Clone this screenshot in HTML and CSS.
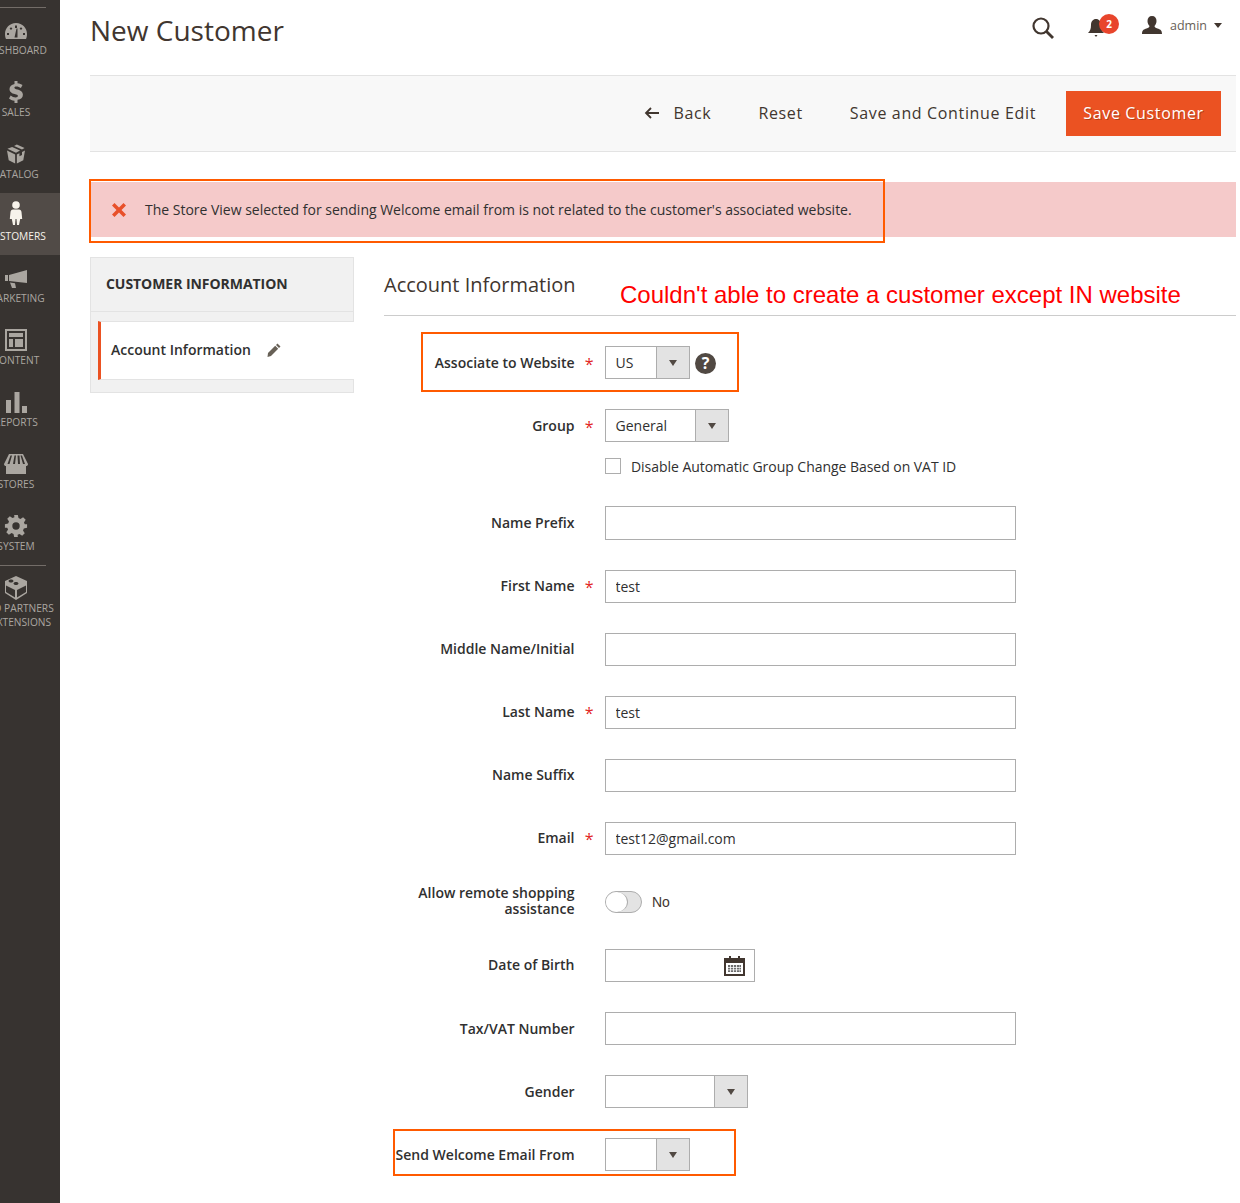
FILE: index.html
```html
<!DOCTYPE html>
<html lang="en">
<head>
    <meta charset="UTF-8">
    <title>New Customer</title>
    <link rel="stylesheet" href="styles.css">
</head>
<body>
    <aside class="sidebar">
        <ul class="nav">
            <li class="nav-rule"></li>
            <li class="nav-item">
                <svg class="nav-icon" viewBox="0 -2 24 24"><path d="M12 3C5.500 3 1 8 1 14c0 2 .4 3.700 1 5h20c.6-1.300 1-3 1-5 0-6-4.500-11-11-11zM5 15H3v-2h2zm2-5L5.600 8.600l1.400-1.400L8.400 8.600zm4-2V5.500h2V8zm2.500 9.500h-3l2-9h1zm3.500-7.500-1.400-1.400L17 7.200l1.400 1.400zm4 5h-2v-2h2z" fill-rule="evenodd"/></svg>
                <span>Dashboard</span>
            </li>
            <li class="nav-item">
                <svg class="nav-icon" viewBox="0 0 24 24"><path d="M10.500 1h3v2.200c2.200.2 3.900 1 5 1.900l-1.600 3c-1.300-.9-2.900-1.600-4.500-1.600-1.300 0-2 .5-2 1.200 0 .9 1 1.200 3 1.800 3 .9 5.500 2.100 5.500 5.300 0 2.800-2 4.600-5.400 5V23h-3v-2.200c-2.300-.2-4.300-1.100-5.500-2.300l1.700-3c1.400 1.200 3.100 2 4.900 2 1.400 0 2.300-.5 2.300-1.400 0-1-1.100-1.400-3.200-2C7.900 13.300 5.500 12 5.500 9c0-2.700 2-4.600 5-5.100z"/></svg>
                <span>Sales</span>
            </li>
            <li class="nav-item">
                <svg class="nav-icon" viewBox="-2 -2 28 28"><path d="M13 1l9 4-3 1.800-9.300-4.200zM7.500 3.700l9.200 4.300L12 10.500 2 6zM1.500 8l9.500 4.700V23l-7.500-3.800L1.500 8zm21 0-2 11.200L13 23V12.700l3-1.500v3.500l3-1.500v-3.500z"/></svg>
                <span>Catalog</span>
            </li>
            <li class="nav-item active">
                <svg class="nav-icon" viewBox="0 0 24 24"><circle cx="12" cy="4" r="3.800"/><path d="M9 8.500h6c1.500 0 2.300 1 2.500 2.500l.7 7h-2L15 24h-2l-.5-6h-1L11 24H9l-1.200-6h-2l.7-7C6.700 9.500 7.500 8.500 9 8.500z"/></svg>
                <span>Customers</span>
            </li>
            <li class="nav-item">
                <svg class="nav-icon" viewBox="0 0 24 24"><path d="M1 9h3v6H1zM5 9L23 4v13L5 15zM6 16.500l5 .8 1 4.700H8z"/></svg>
                <span>Marketing</span>
            </li>
            <li class="nav-item">
                <svg class="nav-icon" viewBox="0 0 24 24"><path d="M1 1h22v22H1zm2 2v18h18V3zm2 2h14v4H5zm0 6h4v8H5zm6 0h8v8h-8z" fill-rule="evenodd"/></svg>
                <span>Content</span>
            </li>
            <li class="nav-item">
                <svg class="nav-icon" viewBox="0 0 24 24"><path d="M2 10h5v13H2zm8.500-8h5v21h-5zM18 16h5v7h-5z"/></svg>
                <span>Reports</span>
            </li>
            <li class="nav-item">
                <svg class="nav-icon" viewBox="0 0 24 24"><path d="M5 2h14l5 10c0 1.500-1 2-2 2v8H2v-8c-1 0-2-.5-2-2zm1.500 1.500L3.500 12h2l2.500-8.500zm4 0L9 12h2l1-8.500zm3 0L14 12h2l-.5-8.500zm3 0L19 12h2l-3-8.500z" fill-rule="evenodd"/></svg>
                <span>Stores</span>
            </li>
            <li class="nav-item">
                <svg class="nav-icon" viewBox="-1 -1 26 26"><path d="M10 0h4l.7 3.400 2.100.9 2.900-1.900 2.800 2.800-1.900 2.900.9 2.100L24 10v4l-3.500.8-.9 2.100 1.900 2.900-2.800 2.800-2.900-1.900-2.100.9L14 24h-4l-.7-3.400-2.100-.9-2.900 1.900-2.800-2.800 1.900-2.900-.9-2.100L0 14v-4l3.500-.8.900-2.100-1.900-2.900 2.800-2.800 2.900 1.900 2.100-.9zm2 8a4 4 0 1 0 0 8 4 4 0 0 0 0-8z" fill-rule="evenodd"/></svg>
                <span>System</span>
            </li>
            <li class="nav-rule"></li>
            <li class="nav-item nav-partners">
                <svg class="nav-icon" viewBox="0 0 24 24"><path d="M12 0l11 5v12l-11 7-11-7V5zM7 3.500c-1.500 0-2.500.7-2.500 1.500S5.500 6.500 7 6.500 9.500 5.800 9.500 5 8.500 3.500 7 3.500zm5 2.500c-1.500 0-2.500.7-2.500 1.500S10.500 9 12 9s2.500-.7 2.500-1.500S13.500 6 12 6zm-1 8L2 9.500V16l9 5.500zm2 0v7.500l9-5.500V9.500z" fill-rule="evenodd"/></svg>
                <span>Find Partners<br>&amp; Extensions</span>
            </li>
        </ul>
    </aside>

    <main class="page">
        <header class="page-header">
            <h1>New Customer</h1>
            <div class="header-tools">
                <svg class="icon-search" viewBox="0 0 22 22"><circle cx="9" cy="9" r="7.500" fill="none" stroke="#41362f" stroke-width="2.200"/><path d="M14.500 14.500L21 21" stroke="#41362f" stroke-width="2.800"/></svg>
                <div class="notice">
                    <svg class="icon-bell" viewBox="0 0 16 20"><path d="M8 1c3 0 5 2.500 5 6 0 4 1 6 3 8H0c2-2 3-4 3-8 0-3.500 2-6 5-6z M6.500 17h3L8 19z" fill="#41362f"/></svg>
                    <span class="badge">2</span>
                </div>
                <div class="user">
                    <svg class="icon-user" viewBox="0 0 20 18"><path d="M10 0c3 0 4.500 2 4.500 5 0 2-.8 3.800-2 5 .1 1.300 1 1.800 3 2.500 2.500.8 4.500 1.600 4.500 5.500H0c0-3.900 2-4.700 4.500-5.500 2-.7 2.900-1.200 3-2.500-1.200-1.200-2-3-2-5 0-3 1.500-5 4.500-5z" fill="#41362f"/></svg>
                    <span class="user-name">admin</span>
                    <span class="caret"></span>
                </div>
            </div>
        </header>

        <div class="actions">
            <a class="action action-back">
                <svg class="icon-back" viewBox="0 0 16 12"><path d="M15 6H2M7 1L2 6l5 5" fill="none" stroke="#41362f" stroke-width="1.800"/></svg>
                Back
            </a>
            <a class="action action-reset">Reset</a>
            <a class="action action-continue">Save and Continue Edit</a>
            <button class="save-button">Save Customer</button>
        </div>

        <div class="message">
            <svg class="icon-error" viewBox="0 0 16 16"><path d="M1 3.500L3.500 1 8 5.500 12.500 1 15 3.500 10.500 8l4.500 4.500-2.500 2.500L8 10.500 3.500 15 1 12.500 5.500 8z" fill="#e8502a"/></svg>
            The Store View selected for sending Welcome email from is not related to the customer's associated website.
        </div>

        <div class="columns">
            <div class="tabs">
                <div class="tabs-title">Customer Information</div>
                <div class="tabs-list">
                    <div class="tab-item">
                        Account Information
                        <svg class="icon-edit" viewBox="0 0 14 14"><path d="M10.500 0.500L13.500 3.500 12 5 9 2zM8.200 2.800l3 3L4 13l-3.500 1L1 10z" fill="#676056"/></svg>
                    </div>
                </div>
            </div>

            <section class="form-section">
                <h2>Account Information</h2>

                <div class="field field-website">
                    <label class="required">Associate to Website</label>
                    <div class="select select-small"><span>US</span><i class="select-arrow"></i></div>
                    <span class="help">?</span>
                </div>

                <div class="field field-group">
                    <label class="required">Group</label>
                    <div class="select select-group"><span>General</span><i class="select-arrow"></i></div>
                </div>

                <div class="field field-check">
                    <label></label>
                    <input class="checkbox" type="checkbox">
                    <span class="check-text">Disable Automatic Group Change Based on VAT ID</span>
                </div>

                <div class="field field-up">
                    <label>Name Prefix</label>
                    <input class="text-input tall" type="text">
                </div>
                <div class="field field-up">
                    <label class="required">First Name</label>
                    <input class="text-input" type="text" value="test">
                </div>
                <div class="field field-up">
                    <label>Middle Name/Initial</label>
                    <input class="text-input" type="text">
                </div>
                <div class="field field-up">
                    <label class="required">Last Name</label>
                    <input class="text-input" type="text" value="test">
                </div>
                <div class="field field-up">
                    <label>Name Suffix</label>
                    <input class="text-input" type="text">
                </div>
                <div class="field field-up">
                    <label class="required">Email</label>
                    <input class="text-input" type="text" value="test12@gmail.com">
                </div>
                <div class="field field-remote">
                    <label>Allow remote shopping assistance</label>
                    <span class="toggle"><i></i></span>
                    <span class="toggle-text">No</span>
                </div>
                <div class="field field-up">
                    <label>Date of Birth</label>
                    <div class="date-input">
                        <svg class="icon-calendar" viewBox="0 0 21 20">
                            <path d="M0 2h21v18H0z" fill="#41362f"/>
                            <path d="M2 7h17v11H2z" fill="#fff"/>
                            <path d="M5 0h2v5H5zm9 0h2v5h-2z" fill="#41362f"/>
                            <path d="M4 9h13v7H4z" fill="#6d6d6d"/>
                            <path d="M6.200 9h.8v7h-.8zm3 0h.8v7h-.8zm3 0h.8v7h-.8zm3 0h.4v7h-.4zM4 11h13v.7H4zm0 2.500h13v.7H4z" fill="#fff"/>
                        </svg>
                    </div>
                </div>
                <div class="field">
                    <label>Tax/VAT Number</label>
                    <input class="text-input" type="text">
                </div>
                <div class="field">
                    <label>Gender</label>
                    <div class="select select-gender"><span></span><i class="select-arrow"></i></div>
                </div>
                <div class="field">
                    <label>Send Welcome Email From</label>
                    <div class="select select-small"><span></span><i class="select-arrow"></i></div>
                </div>
            </section>
        </div>
    </main>

    <!-- annotations drawn over the screenshot -->
    <div class="mark mark-message"></div>
    <div class="mark mark-website"></div>
    <div class="mark mark-welcome"></div>
    <div class="mark-note">Couldn't able to create a customer except IN website</div>
</body>
</html>
```

FILE: styles.css
```css
* {
    box-sizing: border-box;
}

html, body {
    height: 1203px;
    overflow: hidden;
}

body {
    display: flex;
    margin: 0;
    background: #fff;
    font-family: "Open Sans", sans-serif;
    font-size: 14px;
    color: #303030;
}

/* sidebar, cut on the left like the capture */
.sidebar {
    flex: 0 0 60px;
    height: 1203px;
    background: #373330;
    overflow: hidden;
}

.nav {
    list-style: none;
    margin: 7px 0 0;
    padding: 0;
}

.nav-rule {
    width: 46px;
    height: 1px;
    background: #736d68;
}

.nav-item {
    display: flex;
    flex-direction: column;
    align-items: center;
    width: 88px;
    height: 62px;
    margin-left: -28px;
    padding-top: 11px;
    font-size: 10.2px;
    line-height: 14px;
    text-transform: uppercase;
    text-align: center;
    white-space: nowrap;
    color: #aaa6a0;
}

.nav-rule + .nav-item {
    height: 61px;
    padding-top: 10px;
}

.nav-item.active {
    background: #514b47;
    color: #f7f3eb;
}

.nav-icon {
    flex: none;
    width: 24px;
    height: 24px;
    margin-bottom: 1px;
    fill: #aaa6a0;
}

.active .nav-icon {
    margin-top: -3px;
    margin-bottom: 4px;
    fill: #f7f3eb;
}

/* main column */
.page {
    flex: 0 0 1176px;
    padding-left: 30px;
}

.page-header {
    display: flex;
    justify-content: space-between;
    height: 76px;
    border-bottom: 1px solid #e3e3e3;
}

h1 {
    margin: 11px 0 0;
    font-size: 28px;
    font-weight: 400;
    line-height: 38px;
    color: #41362f;
}

.header-tools {
    display: flex;
    align-items: flex-start;
    padding: 14px 14px 0 0;
}

.icon-search {
    width: 22px;
    height: 22px;
    margin: 3px 34px 0 0;
}

.notice {
    position: relative;
    width: 32px;
    margin-right: 22px;
}

.icon-bell {
    width: 16px;
    height: 20px;
    margin-top: 4px;
}

.badge {
    position: absolute;
    top: 0;
    left: 11px;
    width: 20px;
    height: 20px;
    border-radius: 50%;
    background: #e8452c;
    color: #fff;
    font-size: 10px;
    font-weight: 700;
    line-height: 20px;
    text-align: center;
}

.user {
    display: flex;
    align-items: center;
    height: 22px;
    color: #676056;
    font-size: 12.5px;
}

.icon-user {
    width: 20px;
    height: 18px;
    margin-right: 8px;
}

.user-name {
    margin: 2px 7px 0 0;
    line-height: 22px;
}

.caret {
    width: 0;
    height: 0;
    border-style: solid;
    border-width: 5px 4px 0;
    border-color: #41362f transparent transparent;
}

.actions {
    display: flex;
    align-items: center;
    justify-content: flex-end;
    height: 76px;
    padding-right: 15px;
    background: #f8f8f8;
    border-bottom: 1px solid #e3e3e3;
}

.action {
    margin-top: -2px;
    font-size: 16px;
    letter-spacing: 0.65px;
    color: #41362f;
}

.action-back {
    display: flex;
    align-items: center;
    margin-right: 47px;
}

.icon-back {
    width: 16px;
    height: 12px;
    margin-right: 13px;
}

.action-reset {
    margin-right: 47px;
}

.action-continue {
    margin-right: 30px;
}

.save-button {
    width: 155px;
    height: 45px;
    padding: 0 0 2px;
    border: 0;
    background: #eb5222;
    color: #fff;
    font-family: inherit;
    font-size: 16px;
    letter-spacing: 0.65px;
    text-shadow: 1px 1px 0 rgba(0, 0, 0, 0.25);
}

.message {
    display: flex;
    align-items: center;
    height: 55px;
    margin-top: 30px;
    padding-left: 21px;
    background: #f5caca;
    color: #303030;
    font-size: 14px;
    letter-spacing: -0.01px;
}

.icon-error {
    width: 16px;
    height: 16px;
    margin-right: 18px;
}

.columns {
    display: flex;
    margin-top: 20px;
}

.tabs {
    flex: 0 0 264px;
    height: 136px;
    background: #f1f1f1;
    border: 1px solid #e3e3e3;
}

.tabs-title {
    height: 53px;
    padding: 16px 15px 0;
    font-size: 14px;
    font-weight: 700;
    line-height: 19px;
    letter-spacing: -0.05px;
    text-transform: uppercase;
    color: #303030;
}

.tabs-list {
    padding-top: 9px;
    border-top: 1px solid #e3e3e3;
}

.tab-item {
    display: flex;
    align-items: center;
    height: 59px;
    margin-left: 7px;
    margin-right: -1px;
    padding: 0 0 2px 10px;
    background: #fff;
    border-left: 3px solid #eb5222;
    border-top: 1px solid #e3e3e3;
    border-bottom: 1px solid #e3e3e3;
    font-size: 14px;
    font-weight: 600;
    color: #303030;
}

.icon-edit {
    width: 14px;
    height: 14px;
    margin-left: 16px;
}

.form-section {
    flex: 1;
    margin-left: 30px;
}

h2 {
    height: 59px;
    margin: 0 0 30px;
    padding-top: 13px;
    font-size: 20px;
    font-weight: 400;
    line-height: 30px;
    color: #41362f;
    border-bottom: 1px solid #ccc;
}

.field {
    display: flex;
    align-items: center;
    margin-bottom: 30px;
    min-height: 33px;
}

.field label {
    position: relative;
    flex: 0 0 190.5px;
    margin-right: 30.5px;
    font-weight: 600;
    line-height: 19px;
    text-align: right;
    color: #303030;
}

.field-up label {
    margin-top: -2px;
}

.required::after {
    content: "*";
    position: absolute;
    top: 2px;
    right: -19px;
    color: #e22626;
    font-weight: 400;
    font-size: 16px;
}

.field-group {
    margin-bottom: 16px;
}

.field-check {
    height: 16px;
    min-height: 16px;
    margin-bottom: 32px;
}

.field-remote {
    height: 32px;
    margin-bottom: 31px;
}

.field-remote label {
    margin-top: -2px;
    line-height: 16px;
}

.text-input {
    width: 411px;
    height: 33px;
    padding: 0 9.5px;
    border: 1px solid #adadad;
    font-family: inherit;
    font-size: 14px;
    color: #303030;
}

.text-input.tall {
    height: 34px;
}

.select {
    display: flex;
    height: 33px;
    border: 1px solid #adadad;
    background: #fff;
}

.select span {
    flex: 1;
    padding-left: 9.5px;
    line-height: 31px;
}

.select-small {
    width: 85px;
}

.select-group {
    width: 124px;
}

.select-gender {
    width: 143px;
}

.select-arrow {
    display: flex;
    align-items: center;
    justify-content: center;
    flex: 0 0 33px;
    background: #e3e3e3;
    border-left: 1px solid #adadad;
}

.select-arrow::after {
    content: "";
    border-style: solid;
    border-width: 6px 4.5px 0;
    border-color: #514943 transparent transparent;
}

.help {
    width: 21px;
    height: 21px;
    margin: 2px 0 0 5px;
    border-radius: 50%;
    background: #514943;
    color: #fff;
    font-size: 16px;
    font-weight: 700;
    line-height: 21px;
    text-align: center;
}

.checkbox {
    width: 16px;
    height: 16px;
    margin: 0 10px 0 0;
    appearance: none;
    border: 1px solid #adadad;
    background: #fff;
}

.check-text {
    margin-top: 2px;
    line-height: 16px;
    letter-spacing: -0.04px;
    color: #303030;
}

.toggle {
    display: flex;
    width: 37px;
    height: 22px;
    margin-right: 10px;
    border: 1px solid #adadad;
    border-radius: 12px;
    background: #e3e3e3;
}

.toggle i {
    width: 22px;
    height: 20px;
    border-right: 1px solid #adadad;
    border-radius: 50%;
    background: #fff;
}

.toggle-text {
    font-family: "Liberation Sans", sans-serif;
    color: #41362f;
}

.date-input {
    display: flex;
    align-items: center;
    justify-content: flex-end;
    width: 150px;
    height: 33px;
    padding-right: 9px;
    border: 1px solid #adadad;
}

.icon-calendar {
    width: 21px;
    height: 20px;
}

/* orange boxes and the red note on top of the capture */
.mark {
    position: absolute;
    border: 2px solid #ff5a00;
}

.mark-message {
    top: 179px;
    left: 89px;
    width: 796px;
    height: 64px;
}

.mark-website {
    top: 332px;
    left: 421px;
    width: 318px;
    height: 60px;
}

.mark-welcome {
    top: 1129px;
    left: 393px;
    width: 343px;
    height: 47px;
}

.mark-note {
    position: absolute;
    top: 280px;
    left: 620px;
    font-family: "Liberation Sans", sans-serif;
    font-size: 24px;
    line-height: 30px;
    color: #f00;
}
```
